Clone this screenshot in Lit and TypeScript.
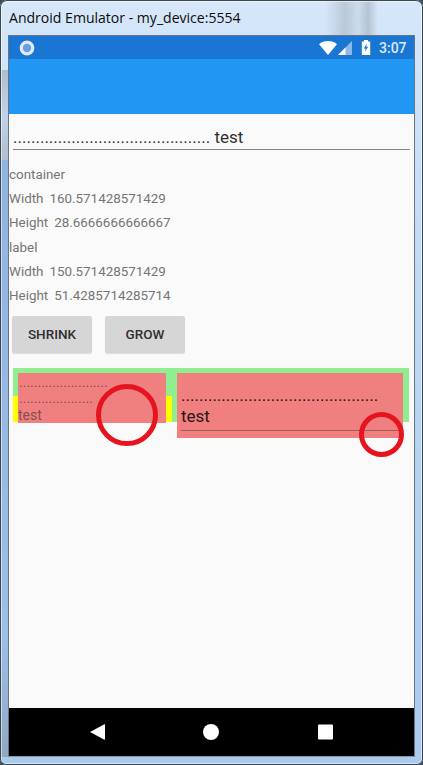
import { LitElement, html, css } from "lit";
import { customElement } from "lit/decorators.js";

@customElement("app-root")
export class AppRoot extends LitElement {
  static styles = css`
    :host { display: block; width: 423px; height: 765px; overflow: hidden; background: #3f4a55; font-family: Roboto, sans-serif; }
    * { box-sizing: border-box; }
    .frame {
      width: 423px; height: 765px; padding: 0 8px 8px; display: flex; flex-direction: column;
      border-radius: 7px 7px 6px 6px;
      box-shadow: inset 0 0 0 1px #3c4650, inset 0 0 0 2px rgba(255,255,255,.55);
      background:
        linear-gradient(90deg, transparent 325px, rgba(130,140,150,.32) 345px, rgba(130,140,150,.12) 358px, rgba(130,140,150,.38) 368px, transparent 378px) 0 0 / 100% 35px no-repeat,
        linear-gradient(180deg, rgba(150,155,165,.55) 0, rgba(150,155,165,.2) 50%, rgba(150,155,165,.5) 100%) 0 70px / 8px 90px no-repeat,
        linear-gradient(180deg, #90b4e0 0, #9cbfe8 80%, #8fa9c4 100%) 0 160px / 8px 597px no-repeat,
        linear-gradient(180deg, #d6e7f9 0, #c6def6 25%, #b4d3f2 60%, #a9cbee 100%);
    }
    .title { flex: none; height: 35px; display: flex; align-items: center; padding: 0 0 1px 1px; font: 14.05px "Open Sans", sans-serif; color: #0c0c0c; }
    .screen { flex: 1; min-height: 0; display: flex; flex-direction: column; border: 1px solid #6a7480; border-bottom-color: #8a96a3; background: #fafafa; }
    .status { flex: none; height: 23px; background: #1976d2; display: flex; align-items: center; padding: 0 9px 0 10px; }
    .status svg { display: block; flex: none; }
    .spacer { flex: 1; }
    .time { font-size: 14px; font-weight: 500; color: #dbe9f8; width: 26px; margin-left: 8px; }
    .bar { flex: none; height: 55px; background: #2196f3; }
    .content { flex: 1; min-height: 0; display: flex; flex-direction: column; }
    .entry { margin: 11px 4px 0 4px; height: 25px; border-bottom: 1px solid #858585; font-size: 17px; line-height: 24px; color: #303030; white-space: pre; }
    .labels { margin-top: 12.5px; display: flex; flex-direction: column; font-size: 13.4px; color: #757575; }
    .labels div { height: 24.4px; line-height: 24.4px; display: flex; gap: 6px; }
    .buttons { margin: 7px 0 0 3px; display: flex; gap: 13px; }
    .btn { width: 80px; height: 37px; background: #d6d6d6; border-radius: 2px; box-shadow: 0 1px 1px rgba(0,0,0,.12); display: flex; align-items: center; justify-content: center; font-size: 13.5px; font-weight: 500; color: #303030; }
    .row { position: relative; margin: 15px 0 0 4px; width: 396px; height: 54px; background: #90ee90; display: flex; align-items: flex-start; }
    .cell { flex: none; width: 159px; height: 54px; display: grid; grid-template-rows: 28px 26px; }
    .yellow { grid-column: 1; grid-row: 2; background: #ffff00; }
    .red-small { grid-column: 1; grid-row: 1 / 3; margin: 5px 6px -1px 5px; background: #f08080; padding-top: 1px; font-size: 14px; line-height: 16.5px; color: #8b4c4d; white-space: pre; }
    .red-small .d { padding-left: 1px; }
    .red-large { flex: none; width: 226px; height: 65px; margin: 5px 0 0 5px; background: #f08080; padding: 12px 3px 0 4px; font-size: 17px; line-height: 21.6px; color: #2a1516; white-space: pre; }
    .under { height: 1px; margin-top: 2px; background: #a85a5c; }
    .circle { position: absolute; border: 5px solid #e6141f; border-radius: 50%; }
    .c1 { left: 83px; top: 16px; width: 62px; height: 62px; }
    .c2 { left: 346px; top: 44px; width: 45px; height: 45px; }
    .nav { flex: none; height: 48px; background: #000; display: flex; align-items: center; padding-left: 81px; }
    .nav svg { display: block; }
  `;

  render() {
    const d44 = ".".repeat(44);
    return html`
      <div class="frame">
        <div class="title">Android Emulator - my_device:5554</div>
        <div class="screen">
          <div class="status">
            <svg width="16" height="16" viewBox="0 0 16 16"><circle cx="8" cy="8" r="7.4" fill="#dfeafa"/><circle cx="8" cy="8" r="4.2" fill="#6d9fdc"/></svg>
            <div class="spacer"></div>
            <svg width="18" height="14" viewBox="0 0 18 14"><path d="M0 3.2C2.3 1.2 5.4 0 9 0s6.7 1.2 9 3.2L9 14z" fill="#fff"/></svg>
            <svg style="margin-left:1px" width="15" height="14" viewBox="0 0 15 14"><path d="M14 0v14H0z" fill="#8fb9ea"/><path d="M7.5 6.5V14H0z" fill="#fff"/></svg>
            <svg style="margin-left:8px" width="10" height="15" viewBox="0 0 10 15"><path d="M3 0h4v1.5h2.2V15H.8V1.5H3z" fill="#fff"/><path d="M5.8 3.4 2.9 8.6h1.8L4 12l3.1-5.2H5.2z" fill="#1976d2"/></svg>
            <div class="time">3:07</div>
          </div>
          <div class="bar"></div>
          <div class="content">
            <div class="entry">${d44} test</div>
            <div class="labels">
              <div>container</div>
              <div><span>Width</span><span>160.571428571429</span></div>
              <div><span>Height</span><span>28.6666666666667</span></div>
              <div>label</div>
              <div><span>Width</span><span>150.571428571429</span></div>
              <div><span>Height</span><span>51.4285714285714</span></div>
            </div>
            <div class="buttons"><div class="btn">SHRINK</div><div class="btn">GROW</div></div>
            <div class="row">
              <div class="cell">
                <div class="yellow"></div>
                <div class="red-small"><div class="d">${".".repeat(24)}</div><div class="d">${".".repeat(20)}</div><div>test</div></div>
              </div>
              <div class="red-large"><div>${d44}</div><div>test</div><div class="under"></div></div>
              <div class="circle c1"></div>
              <div class="circle c2"></div>
            </div>
          </div>
          <div class="nav">
            <svg width="243" height="20" viewBox="0 0 243 20">
              <path d="M0 10 14 2.5c.6-.3 1-.1 1 .6v13.8c0 .7-.4.9-1 .6z" fill="#fff"/>
              <circle cx="121" cy="10" r="8" fill="#fff"/>
              <rect x="228" y="2.5" width="15" height="15" rx="1" fill="#fff"/>
            </svg>
          </div>
        </div>
      </div>
    `;
  }
}
